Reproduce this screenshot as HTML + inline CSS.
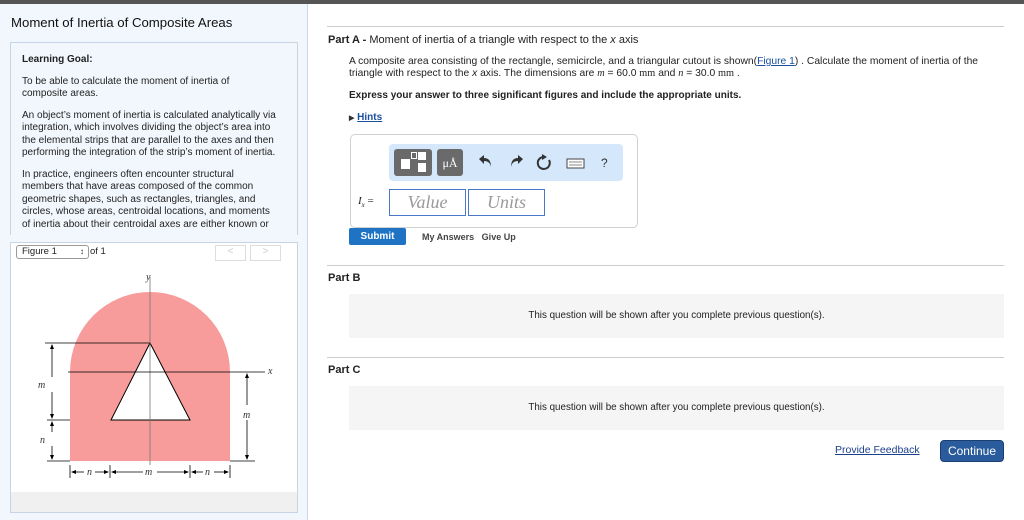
<!DOCTYPE html>
<html><head><style>
body{margin:0;width:1024px;height:520px;overflow:hidden;background:#fff;font-family:"Liberation Sans",Arial,sans-serif;position:relative;color:#222}
.a{position:absolute}
p{margin:0}
</style></head><body>
<div class="a" style="left:0;top:0;width:1024px;height:4px;background:#555"></div>
<div class="a" style="left:0;top:4px;width:307px;height:516px;background:#f2f7fd;border-right:1px solid #c9d6e4"></div>
<div class="a" style="left:11px;top:15px;font-size:13.2px;color:#111">Moment of Inertia of Composite Areas</div>
<div class="a" style="left:10px;top:42px;width:286px;height:192px;border:1px solid #c5d5e6;border-bottom:none;overflow:hidden;font-size:10px;line-height:12.5px">
 <div style="padding:11px 0 0 11px">
 <p style="font-weight:bold;margin-bottom:9px">Learning Goal:</p>
 <p style="margin-bottom:9px">To be able to calculate the moment of inertia of<br>composite areas.</p>
 <p style="margin-bottom:9px">An object’s moment of inertia is calculated analytically via<br>integration, which involves dividing the object’s area into<br>the elemental strips that are parallel to the axes and then<br>performing the integration of the strip’s moment of inertia.</p>
 <p>In practice, engineers often encounter structural<br>members that have areas composed of the common<br>geometric shapes, such as rectangles, triangles, and<br>circles, whose areas, centroidal locations, and moments<br>of inertia about their centroidal axes are either known or</p>
 </div>
</div>
<div class="a" style="left:10px;top:242px;width:286px;height:20px;background:#fff;border:1px solid #c5d5e6"></div>
<div class="a" style="left:16px;top:245px;width:66px;height:12px;border:1px solid #999;border-radius:3px;font-size:9.5px;line-height:12px;padding-left:5px;background:#fff">Figure 1<span style="position:absolute;right:4px;font-size:8px">&#x2195;</span></div>
<div class="a" style="left:90px;top:246px;font-size:9.5px">of 1</div>
<div class="a" style="left:215px;top:245px;width:29px;height:14px;border:1px solid #ddd;color:#ccc;font-size:10px;text-align:center">&lt;</div>
<div class="a" style="left:250px;top:245px;width:29px;height:14px;border:1px solid #ddd;color:#ccc;font-size:10px;text-align:center">&gt;</div>
<div class="a" style="left:10px;top:262px;width:286px;height:230px;background:#fff;border:1px solid #c5d5e6;border-top:none"></div>
<div class="a" style="left:10px;top:492px;width:286px;height:20px;background:#f0f0f0;border:1px solid #c5d5e6;border-top:none"></div>
<svg class="a" style="left:0;top:0" width="307" height="520">
<path d="M70 461 L70 372 A80 80 0 0 1 230 372 L230 461 Z" fill="#f79b9b"/>
<path d="M150 343 L190 420 L111 420 Z" fill="#fff" stroke="#000" stroke-width="1"/>
<g stroke="#000" stroke-width="0.8" fill="none">
<line x1="150" y1="277" x2="150" y2="465" stroke="#777"/>
<line x1="68" y1="372" x2="265" y2="372"/>
<line x1="45" y1="343" x2="150" y2="343"/>
<line x1="47" y1="420" x2="70" y2="420"/>
<line x1="47" y1="461" x2="70" y2="461"/>
<line x1="230" y1="461" x2="255" y2="461"/>
<line x1="52" y1="345" x2="52" y2="377"/><line x1="52" y1="392" x2="52" y2="418"/>
<line x1="52" y1="422" x2="52" y2="432"/><line x1="52" y1="446" x2="52" y2="459"/>
<line x1="247" y1="374" x2="247" y2="405"/><line x1="247" y1="420" x2="247" y2="459"/>
<line x1="70" y1="465" x2="70" y2="478"/><line x1="110" y1="465" x2="110" y2="478"/>
<line x1="190" y1="465" x2="190" y2="478"/><line x1="230" y1="465" x2="230" y2="478"/>
<line x1="72" y1="472" x2="84" y2="472"/><line x1="95" y1="472" x2="108" y2="472"/>
<line x1="112" y1="472" x2="143" y2="472"/><line x1="157" y1="472" x2="188" y2="472"/>
<line x1="192" y1="472" x2="203" y2="472"/><line x1="214" y1="472" x2="228" y2="472"/>
</g>
<g fill="#000">
<path d="M52 344l-2 5h4z M52 419l-2-5h4z M52 421l-2 5h4z M52 460l-2-5h4z M247 373l-2 5h4z M247 460l-2-5h4z"/>
<path d="M71 472l5-2v4z M109 472l-5-2v4z M111 472l5-2v4z M189 472l-5-2v4z M191 472l5-2v4z M229 472l-5-2v4z"/>
</g>
<g font-family="Liberation Serif,serif" font-style="italic" font-size="10" fill="#333">
<text x="146" y="280">y</text><text x="268" y="374">x</text>
<text x="38" y="388">m</text><text x="243" y="418">m</text><text x="40" y="443">n</text>
<text x="87" y="475">n</text><text x="145" y="475">m</text><text x="205" y="475">n</text>
</g>
</svg>

<div class="a" style="left:327px;top:26px;width:677px;height:1px;background:#ccc"></div>
<div class="a" style="left:328px;top:34px;font-size:11px"><b>Part A -</b> Moment of inertia of a triangle with respect to the <i>x</i> axis</div>
<div class="a" style="left:349px;top:56px;font-size:10.3px;line-height:12px;white-space:nowrap">A composite area consisting of the rectangle, semicircle, and a triangular cutout is shown(<span style="color:#1a4fa0;text-decoration:underline">Figure 1</span>) . Calculate the moment of inertia of the<br>triangle with respect to the <i>x</i> axis. The dimensions are <i style="font-family:'Liberation Serif',serif">m</i> = 60.0 <span style="font-family:'Liberation Serif',serif">mm</span> and <i style="font-family:'Liberation Serif',serif">n</i> = 30.0 <span style="font-family:'Liberation Serif',serif">mm</span> .</div>
<div class="a" style="left:349px;top:90px;font-size:10px;font-weight:bold">Express your answer to three significant figures and include the appropriate units.</div>
<div class="a" style="left:349px;top:112px;font-size:10px;font-weight:bold;color:#1a4fa0"><span style="font-size:7px;color:#333">&#9654;</span> <u>Hints</u></div>
<div class="a" style="left:350px;top:134px;width:286px;height:92px;border:1px solid #d0d0d0;border-radius:5px"></div>
<div class="a" style="left:389px;top:144px;width:234px;height:37px;background:#d4e7fb;border-radius:4px"></div>
<div class="a" style="left:394px;top:149px;width:38px;height:27px;background:#6a6a6a;border-radius:3px"></div>
<div class="a" style="left:401px;top:159px;width:9px;height:10px;background:#fff"></div>
<div class="a" style="left:411px;top:152px;width:4px;height:5px;border:1px solid #fff"></div>
<div class="a" style="left:418px;top:152px;width:8px;height:8px;background:#fff"></div>
<div class="a" style="left:418px;top:163px;width:8px;height:9px;background:#fff"></div>
<div class="a" style="left:437px;top:149px;width:26px;height:27px;background:#6a6a6a;border-radius:3px;color:#fff;font-family:'Liberation Serif',serif;font-size:12px;line-height:29px;text-align:center">μÅ</div>
<svg class="a" style="left:475px;top:152px" width="140" height="22">
<path d="M16 15 Q15 9 9 9 L9 12 L4 7 L9 3 L9 6 Q16 6 16 15Z" fill="#333"/>
<path d="M36 15 Q37 9 43 9 L43 12 L48 7 L43 3 L43 6 Q36 6 36 15Z" fill="#333"/>
<path d="M68 5 A6 6 0 1 0 74 8" fill="none" stroke="#333" stroke-width="2"/>
<path d="M67 2 L72 5 L67 8Z" fill="#333"/>
<rect x="92" y="7" width="17" height="9" fill="#fff" stroke="#444"/>
<path d="M94 10h13M94 13h13" stroke="#888"/>
<text x="126" y="15" font-size="12" fill="#333" font-family="Liberation Sans">?</text>
</svg>
<div class="a" style="left:358px;top:195px;font-family:'Liberation Serif',serif;font-style:italic;font-size:11px">I<sub style="font-size:7px">x</sub> <span style="font-style:normal">=</span></div>
<div class="a" style="left:389px;top:189px;width:75px;height:25px;border:1px solid #4a78c8;color:#999;font-family:'Liberation Serif',serif;font-style:italic;font-size:18px;line-height:25px;text-align:center">Value</div>
<div class="a" style="left:468px;top:189px;width:75px;height:25px;border:1px solid #4a78c8;color:#999;font-family:'Liberation Serif',serif;font-style:italic;font-size:18px;line-height:25px;text-align:center">Units</div>
<div class="a" style="left:349px;top:228px;width:57px;height:17px;background:#1f73c4;border-radius:2px;color:#fff;font-weight:bold;font-size:10px;line-height:17px;text-align:center">Submit</div>
<div class="a" style="left:422px;top:232px;font-size:9px;font-weight:bold;color:#444">My Answers&nbsp;&nbsp; Give Up</div>

<div class="a" style="left:327px;top:265px;width:677px;height:1px;background:#ccc"></div>
<div class="a" style="left:328px;top:272px;font-size:11px;font-weight:bold">Part B</div>
<div class="a" style="left:349px;top:294px;width:655px;height:44px;background:#f5f5f5;font-size:9.8px;line-height:44px;text-align:center">This question will be shown after you complete previous question(s).</div>
<div class="a" style="left:327px;top:357px;width:677px;height:1px;background:#ccc"></div>
<div class="a" style="left:328px;top:364px;font-size:11px;font-weight:bold">Part C</div>
<div class="a" style="left:349px;top:386px;width:655px;height:44px;background:#f5f5f5;font-size:9.8px;line-height:44px;text-align:center">This question will be shown after you complete previous question(s).</div>
<div class="a" style="left:835px;top:444px;font-size:10.5px;color:#1a3f8f;text-decoration:underline">Provide Feedback</div>
<div class="a" style="left:940px;top:440px;width:62px;height:20px;background:#2a5b9c;border:1px solid #1a3f70;border-radius:4px;color:#fff;font-size:12px;line-height:20px;text-align:center">Continue</div>
</body></html>
